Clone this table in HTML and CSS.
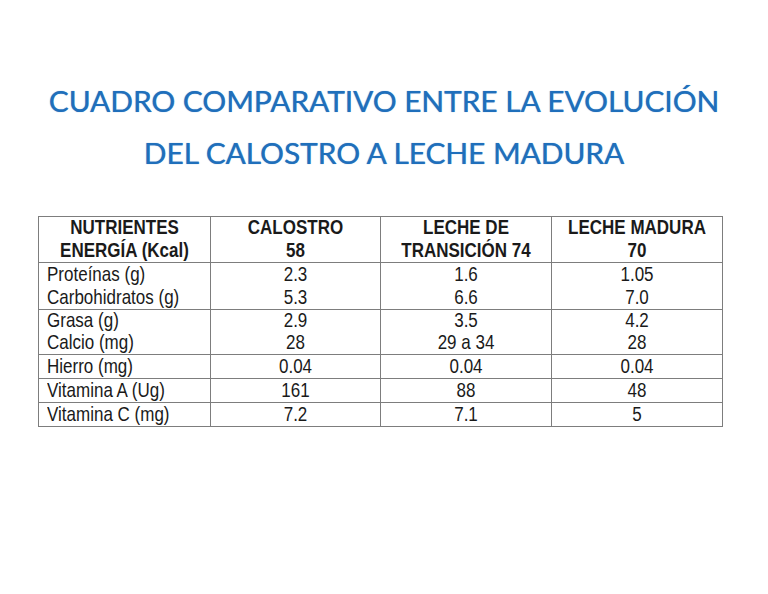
FILE: index.html
```html
<!DOCTYPE html>
<html lang="es">
<head>
<meta charset="utf-8">
<title>Cuadro comparativo</title>
<link rel="stylesheet" href="styles.css">
</head>
<body>
<div class="page">
  <h1 class="title">
    <span class="title-line">CUADRO COMPARATIVO ENTRE LA EVOLUCIÓN</span>
    <span class="title-line">DEL CALOSTRO A LECHE MADURA</span>
  </h1>
  <table class="grid">
    <colgroup>
      <col class="c1"><col class="c2"><col class="c3"><col class="c4">
    </colgroup>
    <thead>
      <tr class="r-head">
        <th><span class="txt">NUTRIENTES</span><br><span class="txt">ENERGÍA (Kcal)</span></th>
        <th><span class="txt">CALOSTRO</span><br><span class="txt">58</span></th>
        <th><span class="txt">LECHE DE</span><br><span class="txt">TRANSICIÓN 74</span></th>
        <th><span class="txt">LECHE MADURA</span><br><span class="txt">70</span></th>
      </tr>
    </thead>
    <tbody>
      <tr class="r-a">
        <td class="name"><span class="txt">Proteínas (g)</span><br><span class="txt">Carbohidratos (g)</span></td>
        <td><span class="txt">2.3</span><br><span class="txt">5.3</span></td>
        <td><span class="txt">1.6</span><br><span class="txt">6.6</span></td>
        <td><span class="txt">1.05</span><br><span class="txt">7.0</span></td>
      </tr>
      <tr class="r-b">
        <td class="name"><span class="txt">Grasa (g)</span><br><span class="txt">Calcio (mg)</span></td>
        <td><span class="txt">2.9</span><br><span class="txt">28</span></td>
        <td><span class="txt">3.5</span><br><span class="txt">29 a 34</span></td>
        <td><span class="txt">4.2</span><br><span class="txt">28</span></td>
      </tr>
      <tr class="r-s">
        <td class="name"><span class="txt">Hierro (mg)</span></td>
        <td><span class="txt">0.04</span></td>
        <td><span class="txt">0.04</span></td>
        <td><span class="txt">0.04</span></td>
      </tr>
      <tr class="r-s">
        <td class="name"><span class="txt">Vitamina A (Ug)</span></td>
        <td><span class="txt">161</span></td>
        <td><span class="txt">88</span></td>
        <td><span class="txt">48</span></td>
      </tr>
      <tr class="r-s">
        <td class="name"><span class="txt">Vitamina C (mg)</span></td>
        <td><span class="txt">7.2</span></td>
        <td><span class="txt">7.1</span></td>
        <td><span class="txt">5</span></td>
      </tr>
    </tbody>
  </table>
</div>
</body>
</html>
```

FILE: styles.css
```css
html, body {
  margin: 0;
  padding: 0;
  background: #ffffff;
}

.page {
  width: 768px;
  height: 594px;
  padding-top: 75px;
  box-sizing: border-box;
}

.title {
  margin: 0;
  font-family: Lato, "Open Sans", sans-serif;
  font-weight: 400;
  font-size: 29.8px;
  line-height: 52px;
  color: #1f6fbb;
  text-align: center;
  text-shadow: 0 0 1px rgba(31, 111, 187, 0.6), 0.3px 0 0 rgba(31, 111, 187, 0.5);
  display: flex;
  flex-direction: column;
  align-items: center;
}

.title-line {
  display: block;
}

.grid {
  margin: 37px 0 0 38px;
  width: 685px;
  border-collapse: collapse;
  table-layout: fixed;
  font-family: "Liberation Sans", Arial, sans-serif;
  font-size: 17px;
  line-height: 22px;
  color: #1a1a1a;
}

.c1 { width: 172px; }
.c2 { width: 170px; }
.c3 { width: 171px; }
.c4 { width: 171px; }

.grid th,
.grid td {
  border: 1px solid #7d7d7d;
  padding: 0 4px;
  text-align: center;
  vertical-align: top;
}

.grid th {
  font-weight: 700;
}

.txt {
  display: inline-block;
  transform: scaleY(1.17);
  transform-origin: 50% 55%;
}

.r-head th { line-height: 22.5px; }
.r-a td { line-height: 23px; }
.r-b td { line-height: 22px; }
.r-s td { line-height: 23px; }

.grid td.name {
  text-align: left;
  padding-left: 8px;
}
```
